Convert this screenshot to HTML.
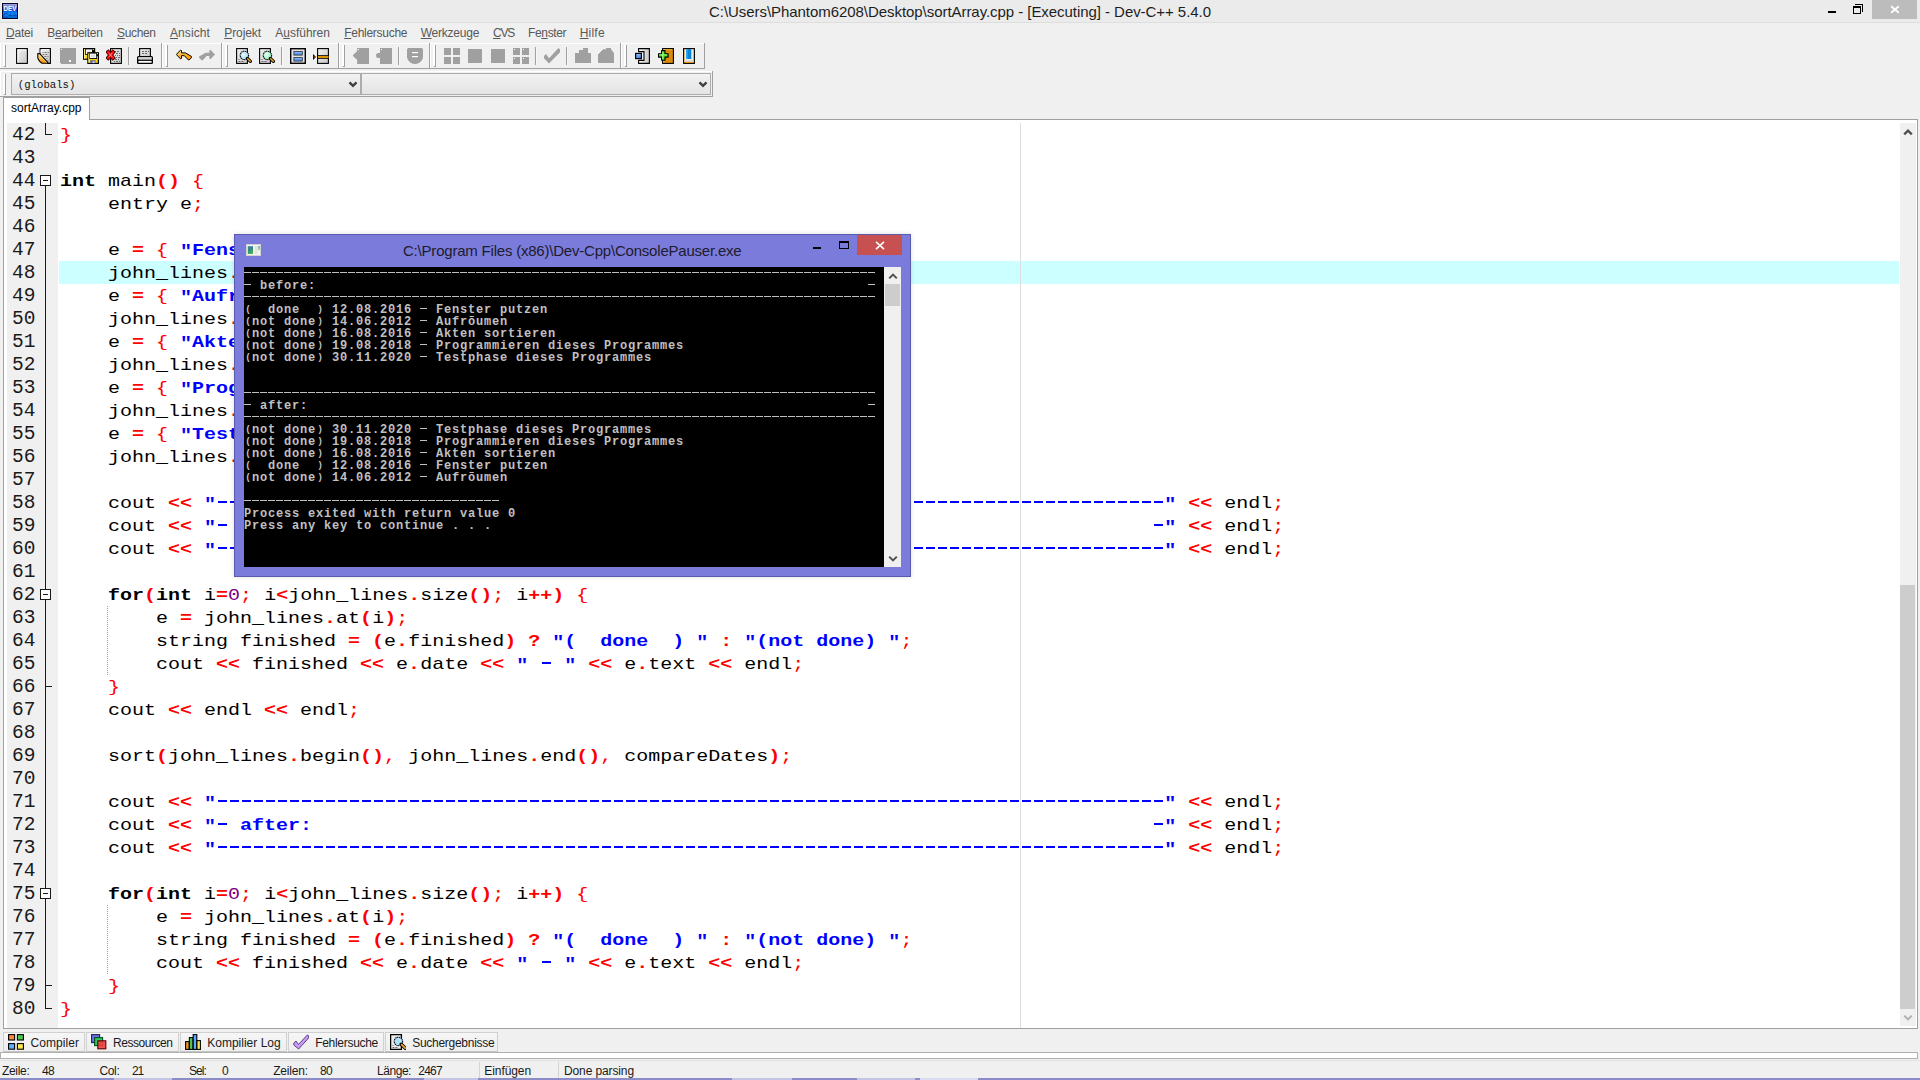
<!DOCTYPE html><html><head><meta charset="utf-8"><title>Dev-C++</title><style>
*{box-sizing:border-box;margin:0;padding:0}
html,body{width:1920px;height:1080px;overflow:hidden;background:#f0f0f0}
body{position:relative;font-family:"Liberation Sans",sans-serif;font-size:12px;color:#000}
.abs{position:absolute}
.t{position:absolute;white-space:pre;line-height:1}
.t u{text-decoration:underline;text-underline-offset:1px}
.mono{font-family:"Liberation Mono",monospace}
#ed{position:absolute;left:3px;top:119px;width:1915px;height:910px;background:#fff;border:1px solid #a0a0a0}
.ln{position:absolute;left:60px;height:23px;line-height:23px;white-space:pre;font-family:"Liberation Mono",monospace;font-size:20px;color:#000;transform:scaleY(0.86);transform-origin:0 16.83px}
.k{font-weight:bold}
.s{color:#f00;font-weight:bold}
.s2{color:#f00}
.q{color:#00f;font-weight:bold}
.n{color:#800080}
.qq{position:relative;top:1px}
.pp{display:inline-block;width:8px;height:9px;line-height:9px;font-size:9.5px;letter-spacing:0;text-align:center;vertical-align:baseline;position:relative;top:-1.5px}
.gn{position:absolute;left:12px;height:23px;line-height:23px;font-family:"Liberation Mono",monospace;font-size:19.5px;color:#1a1a1a;white-space:pre}
.cl{position:absolute;left:244px;height:12px;line-height:12px;white-space:pre;font-family:"Liberation Mono",monospace;font-weight:bold;font-size:12px;letter-spacing:0.8px;color:#c0c0c0}
</style></head><body>
<div class="abs" style="left:0px;top:0px;width:1920px;height:22px;background:#ebebeb;"></div>
<div class="abs" style="left:0px;top:22px;width:1920px;height:1px;background:#dedede;"></div>
<div class="t" style="left:709.00px;top:3.80px;font-size:15px;color:#1e1e1e;letter-spacing:-0.053px;">C:\Users\Phantom6208\Desktop\sortArray.cpp - [Executing] - Dev-C++ 5.4.0</div>
<svg class="abs" style="left:1px;top:2px;" width="18" height="18" viewBox="0 0 18 18"><defs><linearGradient id="ia" x1="0" y1="0" x2="0" y2="1"><stop offset="0" stop-color="#a8a8e0"/><stop offset="1" stop-color="#1838c0"/></linearGradient><linearGradient id="ib" x1="0" y1="0" x2="0" y2="1"><stop offset="0" stop-color="#0c58e0"/><stop offset="0.4" stop-color="#0a88f8"/><stop offset="1" stop-color="#0a68d0"/></linearGradient></defs>
<rect x="0" y="0" width="18" height="18" rx="1.5" fill="#faf8f4" opacity="0.8"/><rect x="1" y="1" width="16" height="16" fill="#06062c"/>
<rect x="2" y="2" width="14" height="6.5" fill="url(#ia)"/><rect x="2" y="8.5" width="14" height="7.5" fill="url(#ib)"/>
<text x="9" y="8.6" font-family="Liberation Sans" font-weight="bold" font-size="6.3" fill="#fff" text-anchor="middle">DEV</text>
<text x="9" y="15.6" font-family="Liberation Sans" font-weight="bold" font-size="7.5" fill="#0650b8" text-anchor="middle">C++</text></svg>
<div class="abs" style="left:1828px;top:11px;width:8px;height:2px;background:#000;"></div>
<svg class="abs" style="left:1852px;top:3px;shape-rendering:crispEdges;" width="12" height="12" viewBox="0 0 12 12"><path d="M1.5 3.5h7v7h-7z M1 4.5h8" fill="none" stroke="#000" stroke-width="1"/><path d="M3 1.5h7.5v7" fill="none" stroke="#000" stroke-width="1"/></svg>
<div class="abs" style="left:1872px;top:0px;width:45px;height:19px;background:#bcbcbc;"></div>
<svg class="abs" style="left:1890px;top:5px;" width="10" height="9" viewBox="0 0 10 9"><path d="M1.2 1.2L8.8 7.8M8.8 1.2L1.2 7.8" stroke="#fff" stroke-width="1.8" fill="none"/></svg>
<div class="t" style="left:6.00px;top:26.84px;font-size:12px;color:#585858;letter-spacing:-0.203px;"><u>D</u>atei</div>
<div class="t" style="left:47.20px;top:26.84px;font-size:12px;color:#585858;letter-spacing:-0.255px;">B<u>e</u>arbeiten</div>
<div class="t" style="left:117.00px;top:26.84px;font-size:12px;color:#585858;letter-spacing:-0.351px;"><u>S</u>uchen</div>
<div class="t" style="left:169.90px;top:26.84px;font-size:12px;color:#585858;letter-spacing:0.106px;"><u>A</u>nsicht</div>
<div class="t" style="left:224.20px;top:26.84px;font-size:12px;color:#585858;letter-spacing:-0.080px;"><u>P</u>rojekt</div>
<div class="t" style="left:275.20px;top:26.84px;font-size:12px;color:#585858;letter-spacing:0.011px;">A<u>u</u>sführen</div>
<div class="t" style="left:344.20px;top:26.84px;font-size:12px;color:#585858;letter-spacing:-0.277px;"><u>F</u>ehlersuche</div>
<div class="t" style="left:420.70px;top:26.84px;font-size:12px;color:#585858;letter-spacing:-0.220px;"><u>W</u>erkzeuge</div>
<div class="t" style="left:493.00px;top:26.84px;font-size:12px;color:#585858;letter-spacing:-1.229px;"><u>C</u>VS</div>
<div class="t" style="left:528.00px;top:26.84px;font-size:12px;color:#585858;letter-spacing:-0.355px;">Fe<u>n</u>ster</div>
<div class="t" style="left:579.70px;top:26.84px;font-size:12px;color:#585858;letter-spacing:0.217px;"><u>H</u>ilfe</div>
<div class="abs" style="left:0px;top:43px;width:162px;height:1px;background:#fff;"></div>
<div class="abs" style="left:0px;top:43px;width:1px;height:26px;background:#fff;"></div>
<div class="abs" style="left:161px;top:43px;width:1px;height:26px;background:#a0a0a0;"></div>
<div class="abs" style="left:3px;top:45px;width:2px;height:21px;background:#fff;"></div>
<div class="abs" style="left:5px;top:45px;width:1px;height:22px;background:#a0a0a0;"></div>
<div class="abs" style="left:4px;top:66px;width:1px;height:1px;background:#a0a0a0;"></div>
<div class="abs" style="left:162px;top:43px;width:60px;height:1px;background:#fff;"></div>
<div class="abs" style="left:162px;top:43px;width:1px;height:26px;background:#fff;"></div>
<div class="abs" style="left:221px;top:43px;width:1px;height:26px;background:#a0a0a0;"></div>
<div class="abs" style="left:165px;top:45px;width:2px;height:21px;background:#fff;"></div>
<div class="abs" style="left:167px;top:45px;width:1px;height:22px;background:#a0a0a0;"></div>
<div class="abs" style="left:166px;top:66px;width:1px;height:1px;background:#a0a0a0;"></div>
<div class="abs" style="left:222px;top:43px;width:117px;height:1px;background:#fff;"></div>
<div class="abs" style="left:222px;top:43px;width:1px;height:26px;background:#fff;"></div>
<div class="abs" style="left:338px;top:43px;width:1px;height:26px;background:#a0a0a0;"></div>
<div class="abs" style="left:225px;top:45px;width:2px;height:21px;background:#fff;"></div>
<div class="abs" style="left:227px;top:45px;width:1px;height:22px;background:#a0a0a0;"></div>
<div class="abs" style="left:226px;top:66px;width:1px;height:1px;background:#a0a0a0;"></div>
<div class="abs" style="left:339px;top:43px;width:91px;height:1px;background:#fff;"></div>
<div class="abs" style="left:339px;top:43px;width:1px;height:26px;background:#fff;"></div>
<div class="abs" style="left:429px;top:43px;width:1px;height:26px;background:#a0a0a0;"></div>
<div class="abs" style="left:342px;top:45px;width:2px;height:21px;background:#fff;"></div>
<div class="abs" style="left:344px;top:45px;width:1px;height:22px;background:#a0a0a0;"></div>
<div class="abs" style="left:343px;top:66px;width:1px;height:1px;background:#a0a0a0;"></div>
<div class="abs" style="left:430px;top:43px;width:191px;height:1px;background:#fff;"></div>
<div class="abs" style="left:430px;top:43px;width:1px;height:26px;background:#fff;"></div>
<div class="abs" style="left:620px;top:43px;width:1px;height:26px;background:#a0a0a0;"></div>
<div class="abs" style="left:433px;top:45px;width:2px;height:21px;background:#fff;"></div>
<div class="abs" style="left:435px;top:45px;width:1px;height:22px;background:#a0a0a0;"></div>
<div class="abs" style="left:434px;top:66px;width:1px;height:1px;background:#a0a0a0;"></div>
<div class="abs" style="left:621px;top:43px;width:84px;height:1px;background:#fff;"></div>
<div class="abs" style="left:621px;top:43px;width:1px;height:26px;background:#fff;"></div>
<div class="abs" style="left:704px;top:43px;width:1px;height:26px;background:#a0a0a0;"></div>
<div class="abs" style="left:624px;top:45px;width:2px;height:21px;background:#fff;"></div>
<div class="abs" style="left:626px;top:45px;width:1px;height:22px;background:#a0a0a0;"></div>
<div class="abs" style="left:625px;top:66px;width:1px;height:1px;background:#a0a0a0;"></div>
<div class="abs" style="left:0px;top:68px;width:705px;height:1px;background:#a0a0a0;"></div>
<div class="abs" style="left:128px;top:47px;width:1px;height:18px;background:#a0a0a0;"></div>
<div class="abs" style="left:129px;top:47px;width:1px;height:18px;background:#f8f8f8;"></div>
<div class="abs" style="left:281px;top:47px;width:1px;height:18px;background:#a0a0a0;"></div>
<div class="abs" style="left:282px;top:47px;width:1px;height:18px;background:#f8f8f8;"></div>
<div class="abs" style="left:398px;top:47px;width:1px;height:18px;background:#a0a0a0;"></div>
<div class="abs" style="left:399px;top:47px;width:1px;height:18px;background:#f8f8f8;"></div>
<div class="abs" style="left:535px;top:47px;width:1px;height:18px;background:#a0a0a0;"></div>
<div class="abs" style="left:536px;top:47px;width:1px;height:18px;background:#f8f8f8;"></div>
<div class="abs" style="left:566px;top:47px;width:1px;height:18px;background:#a0a0a0;"></div>
<div class="abs" style="left:567px;top:47px;width:1px;height:18px;background:#f8f8f8;"></div>
<svg width="0" height="0" style="position:absolute"><defs>
<linearGradient id="gp" x1="0" y1="0" x2="1" y2="1"><stop offset="0" stop-color="#f2f2f2"/><stop offset="0.5" stop-color="#dcdcdc"/><stop offset="1" stop-color="#c8c8c8"/></linearGradient>
<linearGradient id="gh" x1="0" y1="0" x2="1" y2="0"><stop offset="0" stop-color="#ffffff"/><stop offset="1" stop-color="#c4c4c4"/></linearGradient>
<radialGradient id="gb" cx="0.4" cy="0.4" r="0.7"><stop offset="0" stop-color="#eefaff"/><stop offset="1" stop-color="#8fd4f2"/></radialGradient>
<radialGradient id="gg" cx="0.4" cy="0.4" r="0.7"><stop offset="0" stop-color="#e8fff2"/><stop offset="1" stop-color="#7be8b4"/></radialGradient>
<linearGradient id="gbl" x1="0" y1="0" x2="0" y2="1"><stop offset="0" stop-color="#8fc0ff"/><stop offset="1" stop-color="#3f7fe0"/></linearGradient>
<linearGradient id="go" x1="0" y1="0" x2="0.6" y2="1"><stop offset="0" stop-color="#ffe7a0"/><stop offset="0.6" stop-color="#ffb020"/><stop offset="1" stop-color="#ff9800"/></linearGradient>
</defs></svg>
<svg class="abs" style="left:14px;top:48px" width="16" height="16" viewBox="0 0 16 16"><rect x="2.6" y="0.6" width="10.8" height="14.8" fill="url(#gp)" stroke="#000" stroke-width="1.1"/><path d="M4 14.5V2H12" stroke="#fff" stroke-width="1" fill="none" opacity="0.8"/></svg>
<svg class="abs" style="left:37px;top:48px" width="16" height="16" viewBox="0 0 16 16"><path d="M3.1 5.5V0.6H13.4V15.4H11L3.1 7z" fill="url(#gp)" stroke="#000" stroke-width="1.1"/><path d="M4 5V1.6H12.4" stroke="#fff" stroke-width="0.9" fill="none"/><path d="M5.5 4.5h1m1.2 0h1.8m1.2 0h1M5.5 6.5h1.8m1.2 0h1.8M7.5 8.5h1.8m1.2 0h1M9.5 10.5h1M10.5 12.5h1" stroke="#6a6a6a" stroke-width="1" fill="none"/><path d="M0.8 5.6H2.6L11.4 15.2H5L3.2 13.8L1.5 11.6L0.8 10z" fill="url(#go)" stroke="#000" stroke-width="1.1" stroke-linejoin="round"/><path d="M2.2 6.8L9.6 14.6" stroke="#fff5d0" stroke-width="0.7"/></svg>
<svg class="abs" style="left:60px;top:48px" width="16" height="16" viewBox="0 0 16 16" shape-rendering="crispEdges"><path d="M0 0H16V16H1.5L0 14.5z" fill="#a0a0a0"/><rect x="9" y="12" width="2" height="2" fill="#fff"/><rect x="1" y="1" width="1" height="1" fill="#fff"/></svg>
<svg class="abs" style="left:83px;top:48px" width="16" height="16" viewBox="0 0 16 16"><rect x="0.6" y="0.6" width="11" height="10.6" fill="#ffdc10" stroke="#000" stroke-width="1.2"/><rect x="1.2" y="1.2" width="1" height="9.4" fill="#fff6a0"/><rect x="2.2" y="0.8" width="7.6" height="6.2" fill="#000"/><rect x="2.9" y="1.4" width="6.2" height="4.8" fill="#fff"/><rect x="4" y="2.6" width="4.4" height="3" fill="#e6e6e6"/><rect x="9.2" y="1.2" width="2.2" height="3.6" fill="#000"/><rect x="9.7" y="1" width="1.2" height="1.1" fill="#ffea00"/><rect x="4.9" y="4.8" width="10.5" height="10.6" fill="#ffd400" stroke="#000" stroke-width="1.2"/><rect x="5.5" y="5.4" width="1" height="9.4" fill="#fff6a0"/><rect x="6.4" y="5" width="7.6" height="6" fill="#000"/><rect x="7" y="5.6" width="6.3" height="4.5" fill="#fff"/><rect x="8" y="6.6" width="4.3" height="2.9" fill="#dcdcdc"/><rect x="13.6" y="5.2" width="1.4" height="3" fill="#000"/><rect x="13.9" y="5.1" width="1.1" height="1.1" fill="#ffea00"/><rect x="7.2" y="12.2" width="5.3" height="3" fill="#5e6c9c"/><rect x="9.6" y="13.4" width="2" height="1.4" fill="#eee"/></svg>
<svg class="abs" style="left:106px;top:48px" width="16" height="16" viewBox="0 0 16 16"><rect x="4.6" y="0.6" width="10.8" height="14.8" fill="url(#gp)" stroke="#000" stroke-width="1.1"/><path d="M9 3.5h1m1 0h2M10 5.5h2m1 0h1M9 7.5h1m1 0h1m1 0h1M10 9.5h1m1 0h2M9 11.5h2m1 0h1M8 13.5h1m1 0h2m1 0h1" stroke="#6a6a6a" stroke-width="1" fill="none"/><path d="M2.2 4.2L6.9 9.9M6.9 4.2L2.2 9.9" stroke="#2a0000" stroke-width="4.2" stroke-linecap="square"/><path d="M2.2 4.2L6.9 9.9M6.9 4.2L2.2 9.9" stroke="#ff1010" stroke-width="2.6" stroke-linecap="square"/><path d="M3 5.2L6.1 8.9M6.1 5.2L3 8.9" stroke="#ff8c8c" stroke-width="1"/></svg>
<svg class="abs" style="left:137px;top:48px" width="16" height="16" viewBox="0 0 16 16"><rect x="2.6" y="0.6" width="10.8" height="8" fill="url(#gp)" stroke="#000" stroke-width="1.1"/><path d="M5 3.5h2m1 0h2m1 0h1M5 5.5h2m1 0h2" stroke="#6a6a6a" stroke-width="1" fill="none"/><rect x="0.7" y="8.6" width="14.6" height="6.8" rx="0.8" fill="#fff" stroke="#000" stroke-width="1.4"/><rect x="1.5" y="9.4" width="13" height="2" fill="#cfcfcf"/><rect x="1" y="11.6" width="14" height="1.3" fill="#000"/></svg>
<svg class="abs" style="left:176px;top:48px" width="16" height="16" viewBox="0 0 16 16"><path d="M0.4 6.5L4.5 2.1L5.5 2.6V4.9H9.4L15.6 8.5V9.6L13.1 11.9H12.3L8.4 7.7H5.5V10.4L4.5 10.9z" fill="url(#go)" stroke="#000" stroke-width="1" stroke-linejoin="round"/></svg>
<svg class="abs" style="left:199px;top:48px" width="16" height="16" viewBox="0 0 16 16"><path d="M16 6.4L11.4 1.8L10.3 2.4V4.8H6.6L0.1 8.4V9.8L2.7 12.2H3.8L7.6 7.9H10.3V10.6L11.4 11.2z" fill="#a0a0a0"/></svg>
<svg class="abs" style="left:236px;top:48px" width="16" height="16" viewBox="0 0 16 16"><rect x="0.6" y="0.6" width="10.8" height="14.8" fill="url(#gp)" stroke="#000" stroke-width="1.1"/><path d="M2.5 13.5h2m1 0h2M2.5 11.5h1" stroke="#6a6a6a" stroke-width="1" fill="none"/><circle cx="8.4" cy="7.4" r="4.2" fill="url(#gb)" stroke="#000" stroke-width="1.1" stroke-dasharray="1.2 0.6"/><path d="M11.4 10.4L14.4 13.4" stroke="#000" stroke-width="3.2" stroke-linecap="round"/><path d="M11.7 10.7L14.3 13.3" stroke="#f5a623" stroke-width="1.5" stroke-linecap="round"/></svg>
<svg class="abs" style="left:259px;top:48px" width="16" height="16" viewBox="0 0 16 16"><rect x="0.6" y="0.6" width="10.8" height="14.8" fill="url(#gp)" stroke="#000" stroke-width="1.1"/><path d="M2.5 13.5h2m1 0h2M2.5 11.5h1" stroke="#6a6a6a" stroke-width="1" fill="none"/><circle cx="8.4" cy="7.4" r="4.2" fill="url(#gg)" stroke="#000" stroke-width="1.1" stroke-dasharray="1.2 0.6"/><path d="M11.4 10.4L14.4 13.4" stroke="#000" stroke-width="3.2" stroke-linecap="round"/><path d="M11.7 10.7L14.3 13.3" stroke="#f5a623" stroke-width="1.5" stroke-linecap="round"/></svg>
<svg class="abs" style="left:290px;top:48px" width="16" height="16" viewBox="0 0 16 16"><rect x="0.7" y="0.7" width="14.6" height="14.6" fill="#e2e2e2" stroke="#000" stroke-width="1.4"/><rect x="3.9" y="3.5" width="8.4" height="3.6" fill="url(#gbl)" stroke="#303030" stroke-width="0.8"/><rect x="3.9" y="9.5" width="8.4" height="3.6" fill="url(#gbl)" stroke="#303030" stroke-width="0.8"/></svg>
<svg class="abs" style="left:313px;top:48px" width="16" height="16" viewBox="0 0 16 16"><rect x="4.6" y="0.6" width="10.8" height="14.8" fill="url(#gp)" stroke="#000" stroke-width="1.1"/><rect x="4" y="7.2" width="12" height="3.6" fill="#000"/><rect x="5" y="8.1" width="10.5" height="1.8" fill="#f5a000"/><path d="M0 5.9L3 8.9L0 11.9z" fill="#000"/><path d="M0.9 7.9L1.9 8.9L0.9 9.9z" fill="#f5a000"/></svg>
<svg class="abs" style="left:353px;top:48px" width="16" height="16" viewBox="0 0 16 16"><path d="M4.2 0H16V16H4.2V12L0 8V7L4.2 3z" fill="#a0a0a0"/><rect x="5" y="1" width="1" height="1" fill="#fff"/></svg>
<svg class="abs" style="left:376px;top:48px" width="16" height="16" viewBox="0 0 16 16"><path d="M4 0H16V16H4V10H2Q0 10 0 7.5Q0 5 2 5H4z" fill="#a0a0a0"/><rect x="5" y="1" width="1" height="1" fill="#fff"/></svg>
<svg class="abs" style="left:407px;top:48px" width="16" height="16" viewBox="0 0 16 16"><path d="M1.5 0H14.5Q16 0 16 1.5V9Q16 12 12 15Q10 16 8 16Q6 16 4 15Q0 12 0 9V1.5Q0 0 1.5 0z" fill="#a0a0a0"/><rect x="5" y="4" width="6" height="1.2" fill="#fff"/><rect x="5" y="8" width="6" height="1.2" fill="#fff"/></svg>
<svg class="abs" style="left:444px;top:48px" width="16" height="16" viewBox="0 0 16 16" shape-rendering="crispEdges"><rect x="0" y="0" width="7" height="7" fill="#a0a0a0"/><rect x="0" y="9" width="7" height="7" fill="#a0a0a0"/><rect x="9" y="0" width="7" height="7" fill="#a0a0a0"/><rect x="9" y="9" width="7" height="7" fill="#a0a0a0"/></svg>
<svg class="abs" style="left:468px;top:48px" width="16" height="16" viewBox="0 0 16 16" shape-rendering="crispEdges"><rect x="0" y="1" width="14" height="14" fill="#a0a0a0"/></svg>
<svg class="abs" style="left:491px;top:48px" width="16" height="16" viewBox="0 0 16 16" shape-rendering="crispEdges"><rect x="0" y="1" width="14" height="14" fill="#a0a0a0"/></svg>
<svg class="abs" style="left:513px;top:48px" width="16" height="16" viewBox="0 0 16 16" shape-rendering="crispEdges"><rect x="0" y="0" width="7" height="7" fill="#a0a0a0"/><rect x="0" y="9" width="7" height="7" fill="#a0a0a0"/><rect x="9" y="0" width="7" height="7" fill="#a0a0a0"/><rect x="9" y="9" width="7" height="7" fill="#a0a0a0"/><rect x="1" y="1" width="1" height="1" fill="#fff"/><rect x="1" y="10" width="1" height="1" fill="#fff"/><rect x="10" y="1" width="1" height="1" fill="#fff"/><rect x="10" y="10" width="1" height="1" fill="#fff"/></svg>
<svg class="abs" style="left:544px;top:48px" width="16" height="16" viewBox="0 0 16 16"><path d="M0 8L2 6L5 10.2L14.5 0L16 1.5V4.2L5 15.6L0 10.3z" fill="#a0a0a0"/></svg>
<svg class="abs" style="left:575px;top:48px" width="16" height="16" viewBox="0 0 16 16" shape-rendering="crispEdges"><path d="M0 15V5.3H4.4V2H8.2V0H12.8V5.3H16V15z" fill="#a0a0a0"/></svg>
<svg class="abs" style="left:598px;top:48px" width="16" height="16" viewBox="0 0 16 16"><path d="M0 15V6H1V5H2V4H3V3H4V2H5V1.2H8V0H13V1.2L16 5V15z" fill="#a0a0a0"/></svg>
<svg class="abs" style="left:635px;top:48px" width="16" height="16" viewBox="0 0 16 16"><path d="M3.6 0.6H14.4V15.4H3.6V12.4H9V3.6H3.6z" fill="url(#gh)" stroke="#000" stroke-width="1.1"/><rect x="0.6" y="5.4" width="5.8" height="5.2" fill="url(#gbl)" stroke="#000" stroke-width="1.2"/></svg>
<svg class="abs" style="left:658px;top:48px" width="16" height="16" viewBox="0 0 16 16"><rect x="4.6" y="0.6" width="10.8" height="14.8" fill="#d98a0c" stroke="#000" stroke-width="1.1"/><rect x="5.3" y="1.3" width="1" height="13.4" fill="#f2c26a"/><rect x="5.3" y="1.3" width="9" height="0.8" fill="#f6b64a"/><path d="M3.6 2.6H7V5.7H10.1V9.1H7V12.2H3.6V9.1H0.5V5.7H3.6z" fill="#3fe01a" stroke="#000" stroke-width="1.1" stroke-linejoin="round"/><path d="M4.8 3.6V11M1.5 6.9H9" stroke="#b6ff9a" stroke-width="0.9"/></svg>
<svg class="abs" style="left:683px;top:48px" width="16" height="16" viewBox="0 0 16 16"><rect x="0.6" y="0.6" width="10.8" height="14.8" fill="#e8940e" stroke="#000" stroke-width="1.1"/><path d="M1.5 1.3H10.5V14H1.5z" fill="#ececec"/><path d="M1.5 12.2H10.5V14H1.5z" fill="#d8d8d8"/><rect x="3.3" y="1" width="5" height="10" fill="#0a86d8"/><rect x="3.3" y="1" width="1.4" height="10" fill="#2aa6f0"/><path d="M1.5 14.3H10.5" stroke="#f0a020" stroke-width="0.8"/></svg>
<div class="abs" style="left:0px;top:71px;width:713px;height:1px;background:#fff;"></div>
<div class="abs" style="left:0px;top:71px;width:1px;height:26px;background:#fff;"></div>
<div class="abs" style="left:712px;top:71px;width:1px;height:26px;background:#a0a0a0;"></div>
<div class="abs" style="left:0px;top:96px;width:713px;height:1px;background:#a0a0a0;"></div>
<div class="abs" style="left:3px;top:74px;width:2px;height:20px;background:#fff;"></div>
<div class="abs" style="left:5px;top:74px;width:1px;height:21px;background:#a0a0a0;"></div>
<div class="abs" style="left:4px;top:94px;width:1px;height:1px;background:#a0a0a0;"></div>
<div class="abs" style="left:11px;top:73px;width:350px;height:22px;border:1px solid #acacac;background:linear-gradient(#f2f2f2,#e4e4e4)"></div>
<div class="abs" style="left:361px;top:73px;width:350px;height:22px;border:1px solid #acacac;background:linear-gradient(#f2f2f2,#e4e4e4)"></div>
<svg class="abs" style="left:347.5px;top:81px;" width="10" height="8" viewBox="0 0 10 8"><path d="M1.5 1.4L5 4.9L8.5 1.4" fill="none" stroke="#404040" stroke-width="2.4"/></svg>
<svg class="abs" style="left:697.5px;top:81px;" width="10" height="8" viewBox="0 0 10 8"><path d="M1.5 1.4L5 4.9L8.5 1.4" fill="none" stroke="#404040" stroke-width="2.4"/></svg>
<div class="t mono" style="left:17.80px;top:80.32px;font-size:10.67px;color:#101010;letter-spacing:0.000px;">(globals)</div>
<div class="abs" style="left:3px;top:119px;width:1915px;height:1px;background:#a0a0a0;"></div>
<div class="abs" style="left:3px;top:97px;width:87px;height:23px;background:#fff;border:1px solid #a0a0a0;border-bottom:none"></div>
<div class="t" style="left:11.00px;top:101.84px;font-size:12px;color:#000;letter-spacing:0.002px;">sortArray.cpp</div>
<div id="ed"></div>
<div class="abs" style="left:4px;top:119px;width:85px;height:1px;background:#fff;"></div>
<div class="abs" style="left:7px;top:123px;width:51px;height:905px;background:#f0f0f0;"></div>
<div class="abs" style="left:59px;top:261px;width:1840px;height:23px;background:#ccffff;"></div>
<div class="abs" style="left:1020px;top:123px;width:1px;height:905px;background:#dedede;"></div>
<div class="gn" style="top:124px">42</div>
<div class="ln" style="top:123px"><span class="s2">}</span></div>
<div class="gn" style="top:147px">43</div>
<div class="gn" style="top:170px">44</div>
<div class="ln" style="top:169px"><span class="k">int</span> main<span class="s">()</span> <span class="s2">{</span></div>
<div class="gn" style="top:193px">45</div>
<div class="ln" style="top:192px">    entry e<span class="s2">;</span></div>
<div class="gn" style="top:216px">46</div>
<div class="gn" style="top:239px">47</div>
<div class="ln" style="top:238px">    e <span class="s">=</span> <span class="s2">{</span> <span class="q"><span class="qq">"</span>Fens</span></div>
<div class="gn" style="top:262px">48</div>
<div class="ln" style="top:261px">    john_lines<span class="s">.</span></div>
<div class="gn" style="top:285px">49</div>
<div class="ln" style="top:284px">    e <span class="s">=</span> <span class="s2">{</span> <span class="q"><span class="qq">"</span>Aufr</span></div>
<div class="gn" style="top:308px">50</div>
<div class="ln" style="top:307px">    john_lines<span class="s">.</span></div>
<div class="gn" style="top:331px">51</div>
<div class="ln" style="top:330px">    e <span class="s">=</span> <span class="s2">{</span> <span class="q"><span class="qq">"</span>Akte</span></div>
<div class="gn" style="top:354px">52</div>
<div class="ln" style="top:353px">    john_lines<span class="s">.</span></div>
<div class="gn" style="top:377px">53</div>
<div class="ln" style="top:376px">    e <span class="s">=</span> <span class="s2">{</span> <span class="q"><span class="qq">"</span>Prog</span></div>
<div class="gn" style="top:400px">54</div>
<div class="ln" style="top:399px">    john_lines<span class="s">.</span></div>
<div class="gn" style="top:423px">55</div>
<div class="ln" style="top:422px">    e <span class="s">=</span> <span class="s2">{</span> <span class="q"><span class="qq">"</span>Test</span></div>
<div class="gn" style="top:446px">56</div>
<div class="ln" style="top:445px">    john_lines<span class="s">.</span></div>
<div class="gn" style="top:469px">57</div>
<div class="gn" style="top:492px">58</div>
<div class="ln" style="top:491px">    cout <span class="s">&lt;&lt;</span> <span class="q"><span class="qq">"</span>                                                                               <span class="qq">"</span></span> <span class="s">&lt;&lt;</span> endl<span class="s2">;</span></div>
<div class="abs" style="left:216px;top:501px;width:948px;height:2px;background:repeating-linear-gradient(90deg,transparent 0 2px,#00f 2px 11px,transparent 11px 12px)"></div>
<div class="gn" style="top:515px">59</div>
<div class="ln" style="top:514px">    cout <span class="s">&lt;&lt;</span> <span class="q"><span class="qq">"</span>  before:                                                                      <span class="qq">"</span></span> <span class="s">&lt;&lt;</span> endl<span class="s2">;</span></div>
<div class="abs" style="left:216px;top:524px;width:12px;height:2px;background:repeating-linear-gradient(90deg,transparent 0 2px,#00f 2px 11px,transparent 11px 12px)"></div>
<div class="abs" style="left:1152px;top:524px;width:12px;height:2px;background:repeating-linear-gradient(90deg,transparent 0 2px,#00f 2px 11px,transparent 11px 12px)"></div>
<div class="gn" style="top:538px">60</div>
<div class="ln" style="top:537px">    cout <span class="s">&lt;&lt;</span> <span class="q"><span class="qq">"</span>                                                                               <span class="qq">"</span></span> <span class="s">&lt;&lt;</span> endl<span class="s2">;</span></div>
<div class="abs" style="left:216px;top:547px;width:948px;height:2px;background:repeating-linear-gradient(90deg,transparent 0 2px,#00f 2px 11px,transparent 11px 12px)"></div>
<div class="gn" style="top:561px">61</div>
<div class="gn" style="top:584px">62</div>
<div class="ln" style="top:583px">    <span class="k">for</span><span class="s">(</span><span class="k">int</span> i<span class="s">=</span><span class="n">0</span><span class="s2">;</span> i<span class="s">&lt;</span>john_lines<span class="s">.</span>size<span class="s">()</span><span class="s2">;</span> i<span class="s">++)</span> <span class="s2">{</span></div>
<div class="gn" style="top:607px">63</div>
<div class="ln" style="top:606px">        e <span class="s">=</span> john_lines<span class="s">.</span>at<span class="s">(</span>i<span class="s">)</span><span class="s2">;</span></div>
<div class="gn" style="top:630px">64</div>
<div class="ln" style="top:629px">        string finished <span class="s">=</span> <span class="s">(</span>e<span class="s">.</span>finished<span class="s">)</span> <span class="s">?</span> <span class="q"><span class="qq">"</span>(  done  ) <span class="qq">"</span></span> <span class="s">:</span> <span class="q"><span class="qq">"</span>(not done) <span class="qq">"</span></span><span class="s2">;</span></div>
<div class="gn" style="top:653px">65</div>
<div class="ln" style="top:652px">        cout <span class="s">&lt;&lt;</span> finished <span class="s">&lt;&lt;</span> e<span class="s">.</span>date <span class="s">&lt;&lt;</span> <span class="q"><span class="qq">"</span>   <span class="qq">"</span></span> <span class="s">&lt;&lt;</span> e<span class="s">.</span>text <span class="s">&lt;&lt;</span> endl<span class="s2">;</span></div>
<div class="abs" style="left:540px;top:662px;width:12px;height:2px;background:repeating-linear-gradient(90deg,transparent 0 2px,#00f 2px 11px,transparent 11px 12px)"></div>
<div class="gn" style="top:676px">66</div>
<div class="ln" style="top:675px">    <span class="s2">}</span></div>
<div class="gn" style="top:699px">67</div>
<div class="ln" style="top:698px">    cout <span class="s">&lt;&lt;</span> endl <span class="s">&lt;&lt;</span> endl<span class="s2">;</span></div>
<div class="gn" style="top:722px">68</div>
<div class="gn" style="top:745px">69</div>
<div class="ln" style="top:744px">    sort<span class="s">(</span>john_lines<span class="s">.</span>begin<span class="s">()</span><span class="s2">,</span> john_lines<span class="s">.</span>end<span class="s">()</span><span class="s2">,</span> compareDates<span class="s">)</span><span class="s2">;</span></div>
<div class="gn" style="top:768px">70</div>
<div class="gn" style="top:791px">71</div>
<div class="ln" style="top:790px">    cout <span class="s">&lt;&lt;</span> <span class="q"><span class="qq">"</span>                                                                               <span class="qq">"</span></span> <span class="s">&lt;&lt;</span> endl<span class="s2">;</span></div>
<div class="abs" style="left:216px;top:800px;width:948px;height:2px;background:repeating-linear-gradient(90deg,transparent 0 2px,#00f 2px 11px,transparent 11px 12px)"></div>
<div class="gn" style="top:814px">72</div>
<div class="ln" style="top:813px">    cout <span class="s">&lt;&lt;</span> <span class="q"><span class="qq">"</span>  after:                                                                       <span class="qq">"</span></span> <span class="s">&lt;&lt;</span> endl<span class="s2">;</span></div>
<div class="abs" style="left:216px;top:823px;width:12px;height:2px;background:repeating-linear-gradient(90deg,transparent 0 2px,#00f 2px 11px,transparent 11px 12px)"></div>
<div class="abs" style="left:1152px;top:823px;width:12px;height:2px;background:repeating-linear-gradient(90deg,transparent 0 2px,#00f 2px 11px,transparent 11px 12px)"></div>
<div class="gn" style="top:837px">73</div>
<div class="ln" style="top:836px">    cout <span class="s">&lt;&lt;</span> <span class="q"><span class="qq">"</span>                                                                               <span class="qq">"</span></span> <span class="s">&lt;&lt;</span> endl<span class="s2">;</span></div>
<div class="abs" style="left:216px;top:846px;width:948px;height:2px;background:repeating-linear-gradient(90deg,transparent 0 2px,#00f 2px 11px,transparent 11px 12px)"></div>
<div class="gn" style="top:860px">74</div>
<div class="gn" style="top:883px">75</div>
<div class="ln" style="top:882px">    <span class="k">for</span><span class="s">(</span><span class="k">int</span> i<span class="s">=</span><span class="n">0</span><span class="s2">;</span> i<span class="s">&lt;</span>john_lines<span class="s">.</span>size<span class="s">()</span><span class="s2">;</span> i<span class="s">++)</span> <span class="s2">{</span></div>
<div class="gn" style="top:906px">76</div>
<div class="ln" style="top:905px">        e <span class="s">=</span> john_lines<span class="s">.</span>at<span class="s">(</span>i<span class="s">)</span><span class="s2">;</span></div>
<div class="gn" style="top:929px">77</div>
<div class="ln" style="top:928px">        string finished <span class="s">=</span> <span class="s">(</span>e<span class="s">.</span>finished<span class="s">)</span> <span class="s">?</span> <span class="q"><span class="qq">"</span>(  done  ) <span class="qq">"</span></span> <span class="s">:</span> <span class="q"><span class="qq">"</span>(not done) <span class="qq">"</span></span><span class="s2">;</span></div>
<div class="gn" style="top:952px">78</div>
<div class="ln" style="top:951px">        cout <span class="s">&lt;&lt;</span> finished <span class="s">&lt;&lt;</span> e<span class="s">.</span>date <span class="s">&lt;&lt;</span> <span class="q"><span class="qq">"</span>   <span class="qq">"</span></span> <span class="s">&lt;&lt;</span> e<span class="s">.</span>text <span class="s">&lt;&lt;</span> endl<span class="s2">;</span></div>
<div class="abs" style="left:540px;top:961px;width:12px;height:2px;background:repeating-linear-gradient(90deg,transparent 0 2px,#00f 2px 11px,transparent 11px 12px)"></div>
<div class="gn" style="top:975px">79</div>
<div class="ln" style="top:974px">    <span class="s2">}</span></div>
<div class="gn" style="top:998px">80</div>
<div class="ln" style="top:997px"><span class="s2">}</span></div>
<div class="abs" style="left:45px;top:123px;width:1px;height:12px;background:#1a1a1a;"></div>
<div class="abs" style="left:45px;top:134px;width:7px;height:1px;background:#1a1a1a;"></div>
<div class="abs" style="left:45px;top:175px;width:1px;height:834px;background:#1a1a1a;"></div>
<div class="abs" style="left:45px;top:1008px;width:7px;height:1px;background:#1a1a1a;"></div>
<div class="abs" style="left:45px;top:686px;width:7px;height:1px;background:#1a1a1a;"></div>
<div class="abs" style="left:45px;top:985px;width:7px;height:1px;background:#1a1a1a;"></div>
<div class="abs" style="left:40px;top:175px;width:11px;height:11px;background:#fff;border:1px solid #1a1a1a"></div>
<div class="abs" style="left:43px;top:180px;width:5px;height:1px;background:#1a1a1a;"></div>
<div class="abs" style="left:40px;top:589px;width:11px;height:11px;background:#fff;border:1px solid #1a1a1a"></div>
<div class="abs" style="left:43px;top:594px;width:5px;height:1px;background:#1a1a1a;"></div>
<div class="abs" style="left:40px;top:888px;width:11px;height:11px;background:#fff;border:1px solid #1a1a1a"></div>
<div class="abs" style="left:43px;top:893px;width:5px;height:1px;background:#1a1a1a;"></div>
<div class="abs" style="left:107px;top:606px;width:1px;height:69px;background:repeating-linear-gradient(#9a9a9a 0 1px,transparent 1px 2px)"></div>
<div class="abs" style="left:107px;top:905px;width:1px;height:69px;background:repeating-linear-gradient(#9a9a9a 0 1px,transparent 1px 2px)"></div>
<div class="abs" style="left:1900px;top:123px;width:16px;height:903px;background:#f0f0f0;"></div>
<div class="abs" style="left:1900px;top:585px;width:15px;height:424px;background:#cdcdcd;"></div>
<svg class="abs" style="left:1903px;top:128px;" width="10" height="8" viewBox="0 0 10 8"><path d="M1.2 6.4L5 2.6L8.8 6.4" fill="none" stroke="#505050" stroke-width="2.3"/></svg>
<svg class="abs" style="left:1903px;top:1014px;" width="10" height="8" viewBox="0 0 10 8"><path d="M1.2 1.6L5 5.4L8.8 1.6" fill="none" stroke="#b0b0b0" stroke-width="2"/></svg>
<div class="abs" style="left:3px;top:1032px;width:82px;height:20px;border:1px solid #d0d0d0;border-bottom-color:#c4c4c4;background:linear-gradient(#f6f6f6,#eeeeee)"></div>
<div class="t" style="left:30.60px;top:1036.84px;font-size:12px;color:#1a1a1a;letter-spacing:0.048px;">Compiler</div>
<div class="abs" style="left:86px;top:1032px;width:93px;height:20px;border:1px solid #d0d0d0;border-bottom-color:#c4c4c4;background:linear-gradient(#f6f6f6,#eeeeee)"></div>
<div class="t" style="left:113.00px;top:1036.84px;font-size:12px;color:#1a1a1a;letter-spacing:-0.453px;">Ressourcen</div>
<div class="abs" style="left:180px;top:1032px;width:107px;height:20px;border:1px solid #d0d0d0;border-bottom-color:#c4c4c4;background:linear-gradient(#f6f6f6,#eeeeee)"></div>
<div class="t" style="left:207.20px;top:1036.84px;font-size:12px;color:#1a1a1a;letter-spacing:0.010px;">Kompilier Log</div>
<div class="abs" style="left:288px;top:1032px;width:96px;height:20px;border:1px solid #d0d0d0;border-bottom-color:#c4c4c4;background:linear-gradient(#f6f6f6,#eeeeee)"></div>
<div class="t" style="left:315.20px;top:1036.84px;font-size:12px;color:#1a1a1a;letter-spacing:-0.295px;">Fehlersuche</div>
<div class="abs" style="left:385px;top:1032px;width:113px;height:20px;border:1px solid #d0d0d0;border-bottom-color:#c4c4c4;background:linear-gradient(#f6f6f6,#eeeeee)"></div>
<div class="t" style="left:412.20px;top:1036.84px;font-size:12px;color:#1a1a1a;letter-spacing:-0.276px;">Suchergebnisse</div>
<svg class="abs" style="left:8px;top:1034px" width="16" height="16" viewBox="0 0 16 16"><rect x="0.6" y="0.6" width="6" height="5.4" fill="#ff8a3c" stroke="#000" stroke-width="1.1"/><rect x="9.4" y="0.6" width="6" height="5.4" fill="#4fc64f" stroke="#000" stroke-width="1.1"/><rect x="0.6" y="9.6" width="6" height="5.6" fill="#5fb0ff" stroke="#000" stroke-width="1.1"/><rect x="9.4" y="9.6" width="6" height="5.6" fill="#ffe84a" stroke="#000" stroke-width="1.1"/></svg>
<svg class="abs" style="left:91px;top:1034px" width="16" height="16" viewBox="0 0 16 16"><rect x="0.6" y="0.6" width="8" height="8" fill="#7070e8" stroke="#202060" stroke-width="1.1"/><rect x="3.6" y="3.6" width="8" height="8" fill="#30c860" stroke="#005020" stroke-width="1.1"/><rect x="6.8" y="6.8" width="8" height="8" fill="#f04040" stroke="#600000" stroke-width="1.1" fill-opacity="0.9"/></svg>
<svg class="abs" style="left:185px;top:1034px" width="16" height="16" viewBox="0 0 16 16"><rect x="0.6" y="7.6" width="3.6" height="7.8" fill="#ff8a2a" stroke="#000" stroke-width="1.1"/><rect x="4.4" y="3.6" width="3.6" height="11.8" fill="#4fc64f" stroke="#000" stroke-width="1.1"/><rect x="8.2" y="0.6" width="3.6" height="14.8" fill="#5fa8ff" stroke="#000" stroke-width="1.1"/><rect x="12" y="6.6" width="3.4" height="8.8" fill="#ffe84a" stroke="#000" stroke-width="1.1"/></svg>
<svg class="abs" style="left:293px;top:1034px" width="16" height="16" viewBox="0 0 16 16"><path d="M0.8 9L3 7L5.5 10.5L14.5 0.8L15.6 2V4L5.6 15L0.8 11z" fill="#c89cf5" stroke="#50307a" stroke-width="0.9" stroke-linejoin="round"/></svg>
<svg class="abs" style="left:390px;top:1034px" width="16" height="16" viewBox="0 0 16 16"><rect x="0.6" y="0.6" width="10.8" height="14.8" fill="#ececec" stroke="#000" stroke-width="1.3"/><path d="M2.5 13.5h2m1 0h2M2.5 11.5h1" stroke="#6a6a6a"/><circle cx="8.4" cy="7.4" r="4.2" fill="#aee2f8" stroke="#000" stroke-width="1.1" stroke-dasharray="1.2 0.6"/><path d="M11.2 10.2L15.4 14.4" stroke="#000" stroke-width="3.4" stroke-linecap="round"/><path d="M11.6 10.6L15.2 14.2" stroke="#f5a623" stroke-width="1.8" stroke-linecap="round"/></svg>
<div class="abs" style="left:0px;top:1052px;width:1918px;height:7px;background:#fff;border:1px solid #b0b0b0"></div>
<div class="abs" style="left:0px;top:1060px;width:1920px;height:1px;background:#e2e2e2;"></div>
<div class="t" style="left:2.00px;top:1064.84px;font-size:12px;color:#1a1a1a;letter-spacing:-0.324px;">Zeile:</div>
<div class="t" style="left:42.00px;top:1064.84px;font-size:12px;color:#1a1a1a;letter-spacing:-0.680px;">48</div>
<div class="t" style="left:99.40px;top:1064.84px;font-size:12px;color:#1a1a1a;letter-spacing:-0.336px;">Col:</div>
<div class="t" style="left:132.00px;top:1064.84px;font-size:12px;color:#1a1a1a;letter-spacing:-1.180px;">21</div>
<div class="t" style="left:189.00px;top:1064.84px;font-size:12px;color:#1a1a1a;letter-spacing:-0.922px;">Sel:</div>
<div class="t" style="left:222.00px;top:1064.84px;font-size:12px;color:#1a1a1a;letter-spacing:-0.688px;">0</div>
<div class="t" style="left:273.20px;top:1064.84px;font-size:12px;color:#1a1a1a;letter-spacing:-0.204px;">Zeilen:</div>
<div class="t" style="left:320.00px;top:1064.84px;font-size:12px;color:#1a1a1a;letter-spacing:-0.680px;">80</div>
<div class="t" style="left:377.00px;top:1064.84px;font-size:12px;color:#1a1a1a;letter-spacing:-0.451px;">Länge:</div>
<div class="t" style="left:418.30px;top:1064.84px;font-size:12px;color:#1a1a1a;letter-spacing:-0.801px;">2467</div>
<div class="t" style="left:484.30px;top:1064.84px;font-size:12px;color:#1a1a1a;letter-spacing:-0.084px;">Einfügen</div>
<div class="t" style="left:564.00px;top:1064.84px;font-size:12px;color:#1a1a1a;letter-spacing:-0.116px;">Done parsing</div>
<div class="abs" style="left:479px;top:1062px;width:1px;height:16px;background:#d4d4d4;"></div>
<div class="abs" style="left:558px;top:1062px;width:1px;height:16px;background:#d4d4d4;"></div>
<div class="abs" style="left:0px;top:1078px;width:1920px;height:2px;background:#8c8cc8;"></div>
<div class="abs" style="left:114px;top:1078px;width:58px;height:2px;background:#c4c4e4;"></div>
<div class="abs" style="left:424px;top:1078px;width:54px;height:2px;background:#c4c4e4;"></div>
<div class="abs" style="left:732px;top:1078px;width:60px;height:2px;background:#c4c4e4;"></div>
<div class="abs" style="left:857px;top:1078px;width:58px;height:2px;background:#c4c4e4;"></div>
<div class="abs" style="left:920px;top:1078px;width:58px;height:2px;background:#dcdcf0;"></div>
<div class="abs" style="left:234px;top:234px;width:677px;height:343px;background:#7b7bdc;border:1px solid #5a5aae;box-shadow:0 0 5px rgba(0,0,0,0.13)"></div>
<div class="t" style="left:403px;top:242.80px;font-size:15px;color:#1c1c2c;letter-spacing:-0.208px">C:\Program Files (x86)\Dev-Cpp\ConsolePauser.exe</div>
<svg class="abs" style="left:246px;top:244px" width="15" height="12" viewBox="0 0 15 12"><defs><linearGradient id="ca" x1="0" y1="0" x2="0.4" y2="1"><stop offset="0" stop-color="#4a7cb4"/><stop offset="0.5" stop-color="#2f8a80"/><stop offset="1" stop-color="#48b050"/></linearGradient><linearGradient id="cb" x1="0" y1="0" x2="0" y2="1"><stop offset="0" stop-color="#7aa4d4"/><stop offset="0.7" stop-color="#a4e098"/><stop offset="1" stop-color="#f0f8ec"/></linearGradient></defs><rect x="0" y="0" width="15" height="12" fill="#f4f4f2"/><rect x="0.4" y="0.4" width="14.2" height="11.2" fill="none" stroke="#c8c8c4" stroke-width="0.8"/><rect x="1.8" y="2.2" width="5.2" height="7.8" fill="url(#ca)"/><rect x="8.8" y="2.2" width="2.7" height="7.8" fill="#e2e2e2"/><rect x="11.9" y="2.2" width="2.1" height="4.8" fill="url(#cb)"/></svg>
<div class="abs" style="left:813px;top:247px;width:8px;height:2px;background:#000;"></div>
<svg class="abs" style="left:839px;top:241px" width="10" height="8" viewBox="0 0 10 8" shape-rendering="crispEdges"><path d="M0.5 1H9.5V7.5H0.5z" fill="none" stroke="#000" stroke-width="1"/><rect x="0" y="0" width="10" height="2" fill="#000"/></svg>
<div class="abs" style="left:857px;top:235px;width:45px;height:20px;background:#c75050;"></div>
<svg class="abs" style="left:875px;top:241px" width="10" height="9" viewBox="0 0 10 9"><path d="M1 0.8L9 8.2M9 0.8L1 8.2" stroke="#fff" stroke-width="1.6" fill="none"/></svg>
<div class="abs" style="left:244px;top:267px;width:640px;height:300px;background:#000;"></div>
<div class="abs" style="left:884px;top:267px;width:17px;height:300px;background:#f0f0f0;"></div>
<div class="abs" style="left:885px;top:284px;width:15px;height:22px;background:#cdcdcd;"></div>
<svg class="abs" style="left:888px;top:272px" width="10" height="8" viewBox="0 0 10 8"><path d="M1.2 6.4L5 2.6L8.8 6.4" fill="none" stroke="#505050" stroke-width="2"/></svg>
<svg class="abs" style="left:887.5px;top:555px" width="10" height="8" viewBox="0 0 10 8"><path d="M1.2 1.6L5 5.4L8.8 1.6" fill="none" stroke="#505050" stroke-width="2"/></svg>
<div class="abs" style="left:244px;top:272px;width:631px;height:1px;background:repeating-linear-gradient(90deg,#c0c0c0 0 7px,#000 7px 8px)"></div>
<div class="abs" style="left:244px;top:296px;width:631px;height:1px;background:repeating-linear-gradient(90deg,#c0c0c0 0 7px,#000 7px 8px)"></div>
<div class="abs" style="left:244px;top:392px;width:631px;height:1px;background:repeating-linear-gradient(90deg,#c0c0c0 0 7px,#000 7px 8px)"></div>
<div class="abs" style="left:244px;top:416px;width:631px;height:1px;background:repeating-linear-gradient(90deg,#c0c0c0 0 7px,#000 7px 8px)"></div>
<div class="abs" style="left:244px;top:500px;width:255px;height:1px;background:repeating-linear-gradient(90deg,#c0c0c0 0 7px,#000 7px 8px)"></div>
<div class="abs" style="left:244px;top:284px;width:7px;height:1px;background:repeating-linear-gradient(90deg,#c0c0c0 0 7px,#000 7px 8px)"></div>
<div class="abs" style="left:868px;top:284px;width:7px;height:1px;background:repeating-linear-gradient(90deg,#c0c0c0 0 7px,#000 7px 8px)"></div>
<div class="abs" style="left:244px;top:404px;width:7px;height:1px;background:repeating-linear-gradient(90deg,#c0c0c0 0 7px,#000 7px 8px)"></div>
<div class="abs" style="left:868px;top:404px;width:7px;height:1px;background:repeating-linear-gradient(90deg,#c0c0c0 0 7px,#000 7px 8px)"></div>
<div class="cl" style="top:280px">  before:</div>
<div class="abs" style="left:420px;top:308px;width:7px;height:1px;background:repeating-linear-gradient(90deg,#c0c0c0 0 7px,#000 7px 8px)"></div>
<div class="cl" style="top:304px"><span class="pp">(</span>  done  <span class="pp">)</span> 12.08.2016   Fenster putzen</div>
<div class="abs" style="left:420px;top:320px;width:7px;height:1px;background:repeating-linear-gradient(90deg,#c0c0c0 0 7px,#000 7px 8px)"></div>
<div class="cl" style="top:316px"><span class="pp">(</span>not done<span class="pp">)</span> 14.06.2012   Aufrõumen</div>
<div class="abs" style="left:420px;top:332px;width:7px;height:1px;background:repeating-linear-gradient(90deg,#c0c0c0 0 7px,#000 7px 8px)"></div>
<div class="cl" style="top:328px"><span class="pp">(</span>not done<span class="pp">)</span> 16.08.2016   Akten sortieren</div>
<div class="abs" style="left:420px;top:344px;width:7px;height:1px;background:repeating-linear-gradient(90deg,#c0c0c0 0 7px,#000 7px 8px)"></div>
<div class="cl" style="top:340px"><span class="pp">(</span>not done<span class="pp">)</span> 19.08.2018   Programmieren dieses Programmes</div>
<div class="abs" style="left:420px;top:356px;width:7px;height:1px;background:repeating-linear-gradient(90deg,#c0c0c0 0 7px,#000 7px 8px)"></div>
<div class="cl" style="top:352px"><span class="pp">(</span>not done<span class="pp">)</span> 30.11.2020   Testphase dieses Programmes</div>
<div class="cl" style="top:400px">  after:</div>
<div class="abs" style="left:420px;top:428px;width:7px;height:1px;background:repeating-linear-gradient(90deg,#c0c0c0 0 7px,#000 7px 8px)"></div>
<div class="cl" style="top:424px"><span class="pp">(</span>not done<span class="pp">)</span> 30.11.2020   Testphase dieses Programmes</div>
<div class="abs" style="left:420px;top:440px;width:7px;height:1px;background:repeating-linear-gradient(90deg,#c0c0c0 0 7px,#000 7px 8px)"></div>
<div class="cl" style="top:436px"><span class="pp">(</span>not done<span class="pp">)</span> 19.08.2018   Programmieren dieses Programmes</div>
<div class="abs" style="left:420px;top:452px;width:7px;height:1px;background:repeating-linear-gradient(90deg,#c0c0c0 0 7px,#000 7px 8px)"></div>
<div class="cl" style="top:448px"><span class="pp">(</span>not done<span class="pp">)</span> 16.08.2016   Akten sortieren</div>
<div class="abs" style="left:420px;top:464px;width:7px;height:1px;background:repeating-linear-gradient(90deg,#c0c0c0 0 7px,#000 7px 8px)"></div>
<div class="cl" style="top:460px"><span class="pp">(</span>  done  <span class="pp">)</span> 12.08.2016   Fenster putzen</div>
<div class="abs" style="left:420px;top:476px;width:7px;height:1px;background:repeating-linear-gradient(90deg,#c0c0c0 0 7px,#000 7px 8px)"></div>
<div class="cl" style="top:472px"><span class="pp">(</span>not done<span class="pp">)</span> 14.06.2012   Aufrõumen</div>
<div class="cl" style="top:508px">Process exited with return value 0</div>
<div class="cl" style="top:520px">Press any key to continue . . .</div>
</body></html>
